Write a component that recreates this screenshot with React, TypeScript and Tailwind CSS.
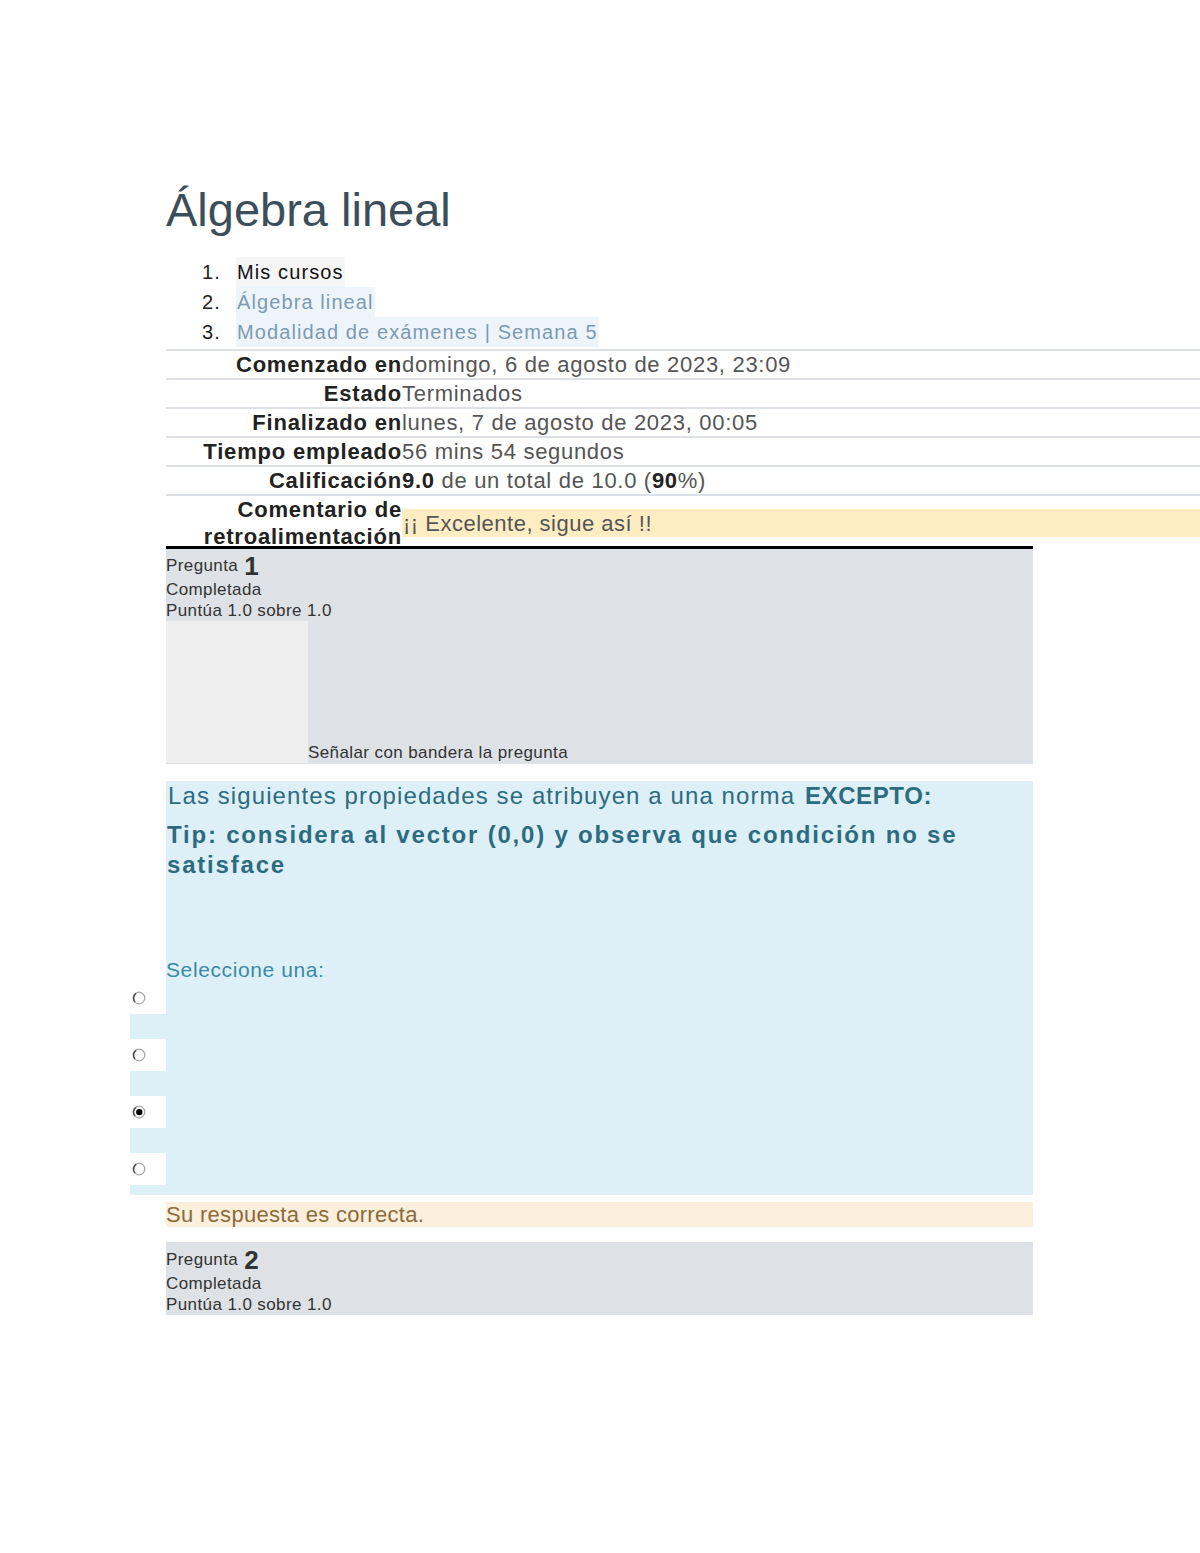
import React from "react";

const sans = { fontFamily: '"Liberation Sans", Arial, sans-serif' };

const rows = [
  { label: "Comenzado en", value: <>domingo, 6 de agosto de 2023, 23:09</> },
  { label: "Estado", value: <>Terminados</> },
  { label: "Finalizado en", value: <>lunes, 7 de agosto de 2023, 00:05</> },
  { label: "Tiempo empleado", value: <>56 mins 54 segundos</> },
  {
    label: "Calificación",
    value: (
      <>
        <b className="font-bold text-[#222]">9.0</b> de un total de 10.0 (
        <b className="font-bold text-[#222]">90</b>%)
      </>
    ),
  },
];

function Radio({ checked }: { checked?: boolean }) {
  return (
    <svg width="14" height="14" viewBox="0 0 14 14">
      <circle cx="7" cy="7" r="5.8" fill="#fff" stroke="#a8a8a8" strokeWidth="1.3" />
      <path d="M4.2 2.3 A5.8 5.8 0 0 0 3 11" fill="none" stroke="#505050" strokeWidth="1.6" />
      {checked && <circle cx="7.3" cy="7.1" r="3.2" fill="#000" />}
    </svg>
  );
}

function QuestionInfo({ n, children, top }: { n: number; children?: React.ReactNode; top: string }) {
  return (
    <div className={`w-[867px] bg-[#dee2e6] text-[17px] tracking-[0.4px] text-[#333] ${top}`}>
      <div className="flex h-[26px] items-end leading-[26px]">
        <span>Pregunta</span>
        <span className="ml-[6px] text-[26px] font-bold leading-[26px]">{n}</span>
      </div>
      <div className="leading-[21px]">Completada</div>
      <div className="leading-[21px]">Puntúa 1.0 sobre 1.0</div>
      {children}
    </div>
  );
}

export default function App() {
  return (
    <div className="min-h-[1553px] w-[1200px] overflow-hidden bg-white" style={sans}>
      <div className="pl-[166px] pt-[182px]">
        <h1 className="text-[47px] leading-[56px] font-normal text-[#3c4e59]">Álgebra lineal</h1>

        <ol className="mt-[19px] text-[20px] leading-[30px] tracking-[1.1px]">
          {[
            { t: "Mis cursos", cls: "bg-[#f6f6f6] text-[#111]" },
            { t: "Álgebra lineal", cls: "bg-[#eef5fa] text-[#7c9ab3]" },
            { t: "Modalidad de exámenes | Semana 5", cls: "bg-[#eef5fa] text-[#7c9ab3]" },
          ].map((item, i) => (
            <li key={item.t} className="-ml-[166px] flex">
              <span className="w-[223px] pr-[2px] text-right text-[#222]">{i + 1}.</span>
              <span className="w-[13px]" />
              <span className={`px-[1px] ${item.cls}`}>{item.t}</span>
            </li>
          ))}
        </ol>

        <div className="mt-[2px] w-[1034px] text-[22px]">
          {rows.map((r) => (
            <div key={r.label} className="grid h-[29px] grid-cols-[236px_1fr] items-center border-t-2 border-[#dde1e6] leading-[27px]">
              <div className="text-right font-bold tracking-[0.8px] text-[#222]">{r.label}</div>
              <div className="tracking-[0.7px] text-[#555]">{r.value}</div>
            </div>
          ))}
          <div className="grid h-[52px] grid-cols-[236px_1fr] items-center border-t-2 border-[#dde1e6]">
            <div className="text-right font-bold leading-[27px] tracking-[0.8px] text-[#222]">
              Comentario de
              <br />
              retroalimentación
            </div>
            <div className="flex h-[28px] items-center bg-[#feedc3] pl-[1px] tracking-[0.5px] text-[#555]">
              ¡¡ Excelente, sigue así !!
            </div>
          </div>
        </div>

        <div className="w-[867px] border-t-[3px] border-black">
          <QuestionInfo n={1} top="pt-[4px]">
            <div className="flex items-end pb-[1px]">
              <div className="h-[142px] w-[142px] bg-[#efefef]" />
              <div className="leading-[20px]">Señalar con bandera la pregunta</div>
            </div>
          </QuestionInfo>
        </div>

        <div className="mt-[17px] w-[867px] bg-[#def0f7]">
          <p className="pl-[2px] text-[24px] leading-[30px] tracking-[1.1px] text-[#2c6b80]">
            Las siguientes propiedades se atribuyen a una norma{" "}
            <b className="ml-[2px] font-bold tracking-[0.6px]">EXCEPTO:</b>
          </p>
          <p className="mt-[9px] pl-[1px] text-[24px] font-bold leading-[30px] tracking-[1.8px] text-[#2c6b80]">
            Tip: considera al vector (0,0) y observa que condición no se
            <br />
            satisface
          </p>
          <p className="mt-[78px] text-[21px] leading-[24px] tracking-[0.6px] text-[#3b8aa6]">Seleccione una:</p>

          <div className="-ml-[36px] flex flex-col gap-[25px] bg-[#def0f7] pb-[10px]">
            {[false, false, true, false].map((c, i) => (
              <div key={i} className="flex h-[32px]">
                <div className="flex h-[32px] w-[36px] items-center bg-white pl-[2px]">
                  <Radio checked={c} />
                </div>
              </div>
            ))}
          </div>
        </div>

        <div className="mt-[7px] flex h-[25px] w-[867px] items-center bg-[#fcefdc] text-[22px] tracking-[0.3px] text-[#8b6b3b]">
          Su respuesta es correcta.
        </div>

        <div className="mt-[15px]">
          <QuestionInfo n={2} top="pt-[5px]" />
        </div>
      </div>
    </div>
  );
}
